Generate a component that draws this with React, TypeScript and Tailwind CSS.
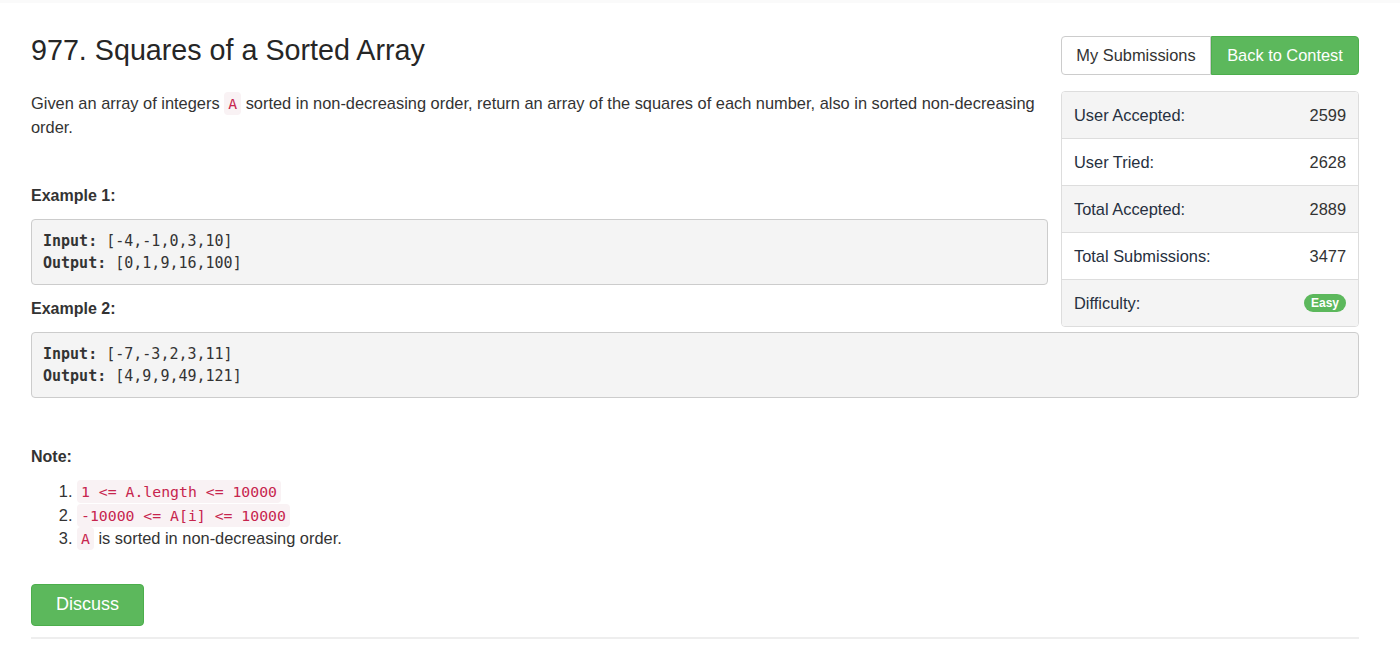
const stats = [
  { label: 'User Accepted:', value: '2599' },
  { label: 'User Tried:', value: '2628' },
  { label: 'Total Accepted:', value: '2889' },
  { label: 'Total Submissions:', value: '3477' },
]

const sans = "font-['Helvetica_Neue','Liberation_Sans',Arial,sans-serif]"
const mono = "font-['DejaVu_Sans_Mono',Menlo,monospace]"

function Code({ children }: { children: React.ReactNode }) {
  return (
    <code className={`${mono} rounded-[4px] bg-[#f9f2f4] px-1 py-[3px] text-[14.8px] leading-none text-[#c7254e]`}>
      {children}
    </code>
  )
}

function Sample({ input, output }: { input: string; output: string }) {
  return (
    <pre
      className={`${mono} mt-[11px] overflow-auto rounded-[4px] border border-[#ccc] bg-[#f4f4f4] px-[11px] py-[10px] text-[15px] leading-[22px] text-[#333]`}
    >
      <b>Input:</b> {input}
      {'\n'}
      <b>Output:</b> {output}
    </pre>
  )
}

export default function App() {
  return (
    <div className={`${sans} min-h-[649px] bg-white text-[#333]`}>
      <div className="h-[3px] bg-[#fafafa]" />
      <div className="ml-[31px] w-[1328px] pt-[29px]">
        {/* Sidebar */}
        <div className="float-right ml-[13px] w-[298px]">
          <div className="mt-[4px] flex h-[39px] text-[16.4px]">
            <button className="flex w-[150px] items-center justify-center rounded-l-[4px] border border-[#ccc] bg-white text-[#333]">
              My Submissions
            </button>
            <button className="flex flex-1 items-center justify-center rounded-r-[4px] border border-[#4cae4c] bg-[#5cb85c] text-white">
              Back to Contest
            </button>
          </div>
          <div className="mt-[16px] divide-y divide-[#ddd] overflow-hidden rounded-[4px] border border-[#ddd] text-[16.4px] text-[#263040]">
            {stats.map((s, i) => (
              <div
                key={s.label}
                className={`flex h-[47px] items-center justify-between px-[12px] ${i % 2 === 0 ? 'bg-[#f4f4f4]' : 'bg-white'}`}
              >
                <span>{s.label}</span>
                <span className="text-[#333]">{s.value}</span>
              </div>
            ))}
            <div className="flex h-[46px] items-center justify-between bg-[#f4f4f4] px-[12px]">
              <span>Difficulty:</span>
              <span className="flex h-[18px] items-center rounded-full bg-[#5cb85c] px-[7px] text-[12px] font-bold text-white">
                Easy
              </span>
            </div>
          </div>
        </div>

        <h1 className="text-[28.7px] leading-[36px] font-normal text-[#262626]">977. Squares of a Sorted Array</h1>

        <p className="mt-[23px] text-[16.4px] leading-6">
          Given an array of integers <Code>A</Code> sorted in non-decreasing order, return an array of the squares of
          each number, also in sorted non-decreasing order.
        </p>

        <p className="mt-[45px] text-base font-bold leading-6">Example 1:</p>
        <Sample input="[-4,-1,0,3,10]" output="[0,1,9,16,100]" />

        <p className="mt-[12px] text-base font-bold leading-6">Example 2:</p>
        <Sample input="[-7,-3,2,3,11]" output="[4,9,9,49,121]" />

        <p className="mt-[47px] text-base font-bold leading-6">Note:</p>
        <ol className="mt-[11px] list-decimal pl-[46px] text-[16.4px] leading-[23.5px]">
          <li>
            <Code>1 &lt;= A.length &lt;= 10000</Code>
          </li>
          <li>
            <Code>-10000 &lt;= A[i] &lt;= 10000</Code>
          </li>
          <li>
            <Code>A</Code> is sorted in non-decreasing order.
          </li>
        </ol>

        <button className="mt-[33px] flex h-[42px] w-[113px] items-center justify-center rounded-[4px] border border-[#4cae4c] bg-[#5cb85c] text-[18px] text-white">
          Discuss
        </button>
        <div className="mt-[11px] h-[2px] bg-[#eee]" />
      </div>
    </div>
  )
}
